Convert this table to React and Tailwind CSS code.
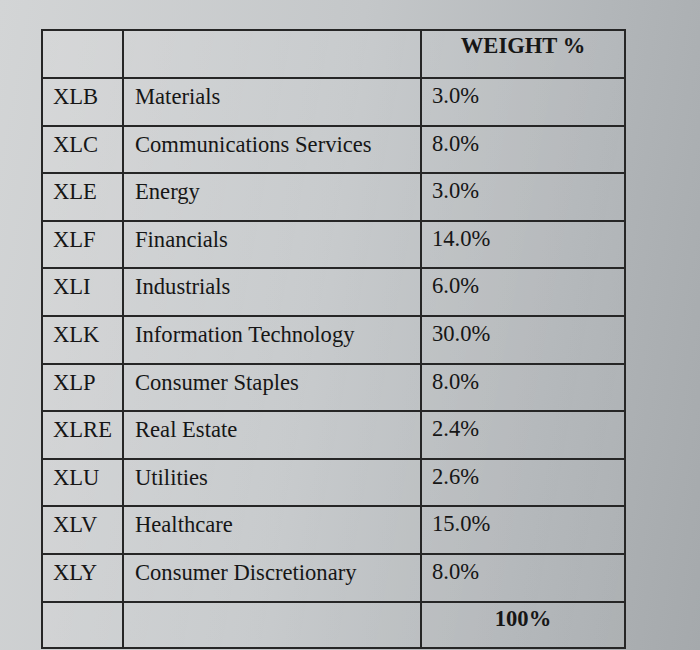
import React from "react";

const rows = [
    ["XLB", "Materials", "3.0%"],
    ["XLC", "Communications Services", "8.0%"],
    ["XLE", "Energy", "3.0%"],
    ["XLF", "Financials", "14.0%"],
    ["XLI", "Industrials", "6.0%"],
    ["XLK", "Information Technology", "30.0%"],
    ["XLP", "Consumer Staples", "8.0%"],
    ["XLRE", "Real Estate", "2.4%"],
    ["XLU", "Utilities", "2.6%"],
    ["XLV", "Healthcare", "15.0%"],
    ["XLY", "Consumer Discretionary", "8.0%"],
];

export default function App() {
    return (
        <div
            className="h-[650px] w-[700px] overflow-hidden bg-[linear-gradient(100deg,#d3d5d6_0%,#c4c7c9_45%,#b2b6b9_75%,#a5a9ac_100%)] pt-[29px] pl-[41px] text-[#161616]"
            style={{ fontFamily: '"Liberation Serif", "Times New Roman", serif' }}
        >
            <table className="w-[583px] table-fixed border-collapse bg-[linear-gradient(100deg,rgba(255,255,255,0.1),rgba(255,255,255,0.03))] text-[22.6px] leading-[1.15]">
                <colgroup>
                    <col className="w-[81px]" />
                    <col className="w-[298px]" />
                    <col className="w-[204px]" />
                </colgroup>
                <tbody>
                    <tr className="h-[48px]">
                        <td className="border-2 border-[#262626]" />
                        <td className="border-2 border-[#262626]" />
                        <td className="border-2 border-[#262626] pt-[2px] text-center align-top font-bold">
                            WEIGHT %
                        </td>
                    </tr>
                    {rows.map(([code, name, weight]) => (
                        <tr key={code} className="h-[47.6px]">
                            <td className="border-2 border-[#262626] pt-[5px] pl-[10px] align-top">
                                {code}
                            </td>
                            <td className="border-2 border-[#262626] pt-[5px] pl-[11px] align-top">
                                {name}
                            </td>
                            <td className="border-2 border-[#262626] pt-[4px] pl-[10px] align-top">
                                {weight}
                            </td>
                        </tr>
                    ))}
                    <tr className="h-[46px]">
                        <td className="border-2 border-[#262626]" />
                        <td className="border-2 border-[#262626]" />
                        <td className="border-2 border-[#262626] pt-[3px] text-center align-top font-bold">
                            100%
                        </td>
                    </tr>
                </tbody>
            </table>
        </div>
    );
}
